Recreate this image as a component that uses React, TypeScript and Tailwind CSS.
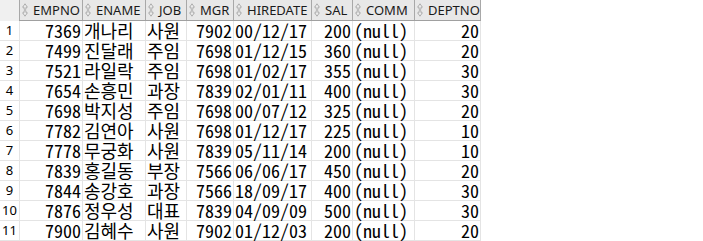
import React from "react";

const rows: [string, string, string, string, string, string, string, string][] = [
  ["7369", "개나리", "사원", "7902", "00/12/17", "200", "(null)", "20"],
  ["7499", "진달래", "주임", "7698", "01/12/15", "360", "(null)", "20"],
  ["7521", "라일락", "주임", "7698", "01/02/17", "355", "(null)", "30"],
  ["7654", "손흥민", "과장", "7839", "02/01/11", "400", "(null)", "30"],
  ["7698", "박지성", "주임", "7698", "00/07/12", "325", "(null)", "20"],
  ["7782", "김연아", "사원", "7698", "01/12/17", "225", "(null)", "10"],
  ["7778", "무궁화", "사원", "7839", "05/11/14", "200", "(null)", "10"],
  ["7839", "홍길동", "부장", "7566", "06/06/17", "450", "(null)", "20"],
  ["7844", "송강호", "과장", "7566", "18/09/17", "400", "(null)", "30"],
  ["7876", "정우성", "대표", "7839", "04/09/09", "500", "(null)", "30"],
  ["7900", "김혜수", "사원", "7902", "01/12/03", "200", "(null)", "20"],
];

const headers = ["EMPNO", "ENAME", "JOB", "MGR", "HIREDATE", "SAL", "COMM", "DEPTNO"];
const widths = ["w-[63px]", "w-[63px]", "w-[41px]", "w-[47px]", "w-[78px]", "w-[41px]", "w-[62px]", "w-[67px]"];
const right = [true, false, false, true, false, true, false, true];

function SortIcon() {
  return (
    <svg width="6" height="14" viewBox="0 0 6 14" className="shrink-0">
      <path d="M3 0.8 L5.4 4.2 L4 4.2 L4 6.2 L2 6.2 L2 4.2 L0.6 4.2 Z" fill="#ececec" stroke="#a8a8a8" strokeWidth="0.9" strokeLinejoin="round" />
      <path d="M3 13.2 L5.4 9.8 L4 9.8 L4 7.8 L2 7.8 L2 9.8 L0.6 9.8 Z" fill="#ececec" stroke="#a8a8a8" strokeWidth="0.9" strokeLinejoin="round" />
    </svg>
  );
}

const mono = "font-['Noto_Sans_Mono_CJK_KR','DejaVu_Sans_Mono','Noto_Sans_CJK_KR',monospace]";

export default function App() {
  return (
    <div className="w-[703px] h-[241px] bg-white overflow-hidden">
      <div className="flex flex-col w-[482px]">
        <div className="flex h-[21px]">
          <div className="w-[19px] h-[21px] bg-[#f0f0f0] shrink-0" />
          <div className="flex border-b border-[#a0a0a0] h-[21px]">
            {headers.map((h, i) => (
              <div
                key={h}
                className={`${widths[i]} h-[20px] shrink-0 flex items-center gap-[5px] pl-[2px] bg-[#e8e8e8] border-l border-[#a8a8a8] ${i === headers.length - 1 ? "border-r" : ""} font-['Noto_Sans',sans-serif] text-[13px] text-[#1a1a1a] leading-none`}
              >
                <SortIcon />
                <span className="whitespace-nowrap">{h}</span>
              </div>
            ))}
          </div>
        </div>
        {rows.map((r, ri) => (
          <div key={ri} className="flex h-[20px]">
            <div className="w-[19px] shrink-0 h-[20px] border-b border-[#e4e4e4] flex justify-center font-['Noto_Sans',sans-serif] text-[13px] leading-[18px] text-black">
              {ri + 1}
            </div>
            {r.map((c, ci) => (
              <div
                key={ci}
                className={`${widths[ci]} shrink-0 h-[20px] border-b border-l border-[#e4e4e4] ${ci === r.length - 1 ? "border-r" : ""} flex ${right[ci] ? "justify-end pr-[1px]" : "justify-start pl-[1px]"} ${mono} text-[18px] leading-[18px] text-black whitespace-nowrap`}
              >
                {c}
              </div>
            ))}
          </div>
        ))}
      </div>
    </div>
  );
}
